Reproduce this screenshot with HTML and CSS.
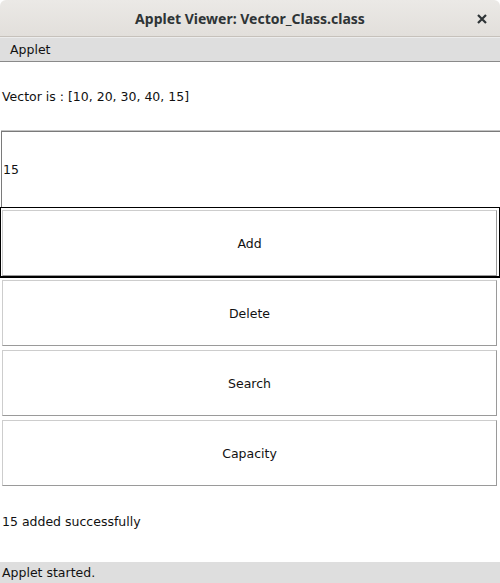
FILE: index.html
```html
<!DOCTYPE html>
<html>
<head>
<meta charset="utf-8">
<title>Applet Viewer: Vector_Class.class</title>
<link rel="stylesheet" href="styles.css">
</head>
<body>
<div class="window">
  <div class="titlebar">
    <span class="title">Applet Viewer: Vector_Class.class</span>
    <span class="close">
      <svg width="10" height="10" viewBox="0 0 10 10"><path d="M1 1L9 9M9 1L1 9" stroke="#2e3436" stroke-width="2.2" stroke-linecap="butt"/></svg>
    </span>
  </div>
  <div class="menubar"><span class="menu">Applet</span></div>
  <div class="applet">
    <div class="label-row">Vector is : [10, 20, 30, 40, 15]</div>
    <div class="textfield">15</div>
    <div class="focus">
      <div class="button">Add</div>
    </div>
    <div class="button">Delete</div>
    <div class="button">Search</div>
    <div class="button">Capacity</div>
    <div class="result-row">15 added successfully</div>
  </div>
  <div class="statusbar">Applet started.</div>
</div>
</body>
</html>
```
FILE: styles.css
```css
html, body {
  margin: 0;
  padding: 0;
  background: #ffffff;
}
.window {
  width: 500px;
  height: 583px;
  display: flex;
  flex-direction: column;
  font-family: "DejaVu Sans", sans-serif;
  font-size: 12.5px;
  color: #111;
  overflow: hidden;
}
.titlebar {
  height: 36px;
  border-bottom: 1px solid #c6c1bb;
  background: linear-gradient(#ebe9e6, #e2dfdb);
  border-radius: 6px 6px 0 0;
  display: flex;
  align-items: center;
  justify-content: center;
  position: relative;
}
.title {
  font-family: "Noto Sans", sans-serif;
  font-weight: 700;
  font-size: 14px;
  color: #2e3436;
}
.close {
  position: absolute;
  right: 13px;
  top: 14px;
  width: 10px;
  height: 10px;
  display: flex;
}
.menubar {
  background: #dedede;
  border-top: 1px solid #ececec;
  border-bottom: 1px solid #8a8a8a;
  display: flex;
  align-items: center;
  box-sizing: border-box;
  height: 25px;
}
.menu {
  padding-left: 10px;
  color: #111;
}
.applet {
  flex: 1;
  display: flex;
  flex-direction: column;
  background: #fff;
}
.label-row {
  height: 68px;
  display: flex;
  align-items: center;
  padding-left: 2px;
}
.textfield {
  margin-left: 1px;
  width: 497px;
  height: 75px;
  border-top: 1px solid #7a7a7a;
  border-left: 1px solid #7a7a7a;
  border-right: 1px solid #d4d4d4;
  box-shadow: 0 -1px 0 #c4c4c4;
  margin-top: 1px;
  display: flex;
  align-items: center;
  padding-left: 1px;
}
.focus {
  width: 497px;
  height: 66px;
  border-style: solid;
  border-color: #000;
  border-width: 1px 2px 2px 1px;
  padding: 2px 0 0 1px;
  box-sizing: content-box;
}
.focus .button {
  margin: 0;
}
.button {
  margin: 4px 0 0 2px;
  width: 493px;
  height: 64px;
  border-style: solid;
  border-width: 1px;
  border-color: #cdcdcd #9a9a9a #9a9a9a #cdcdcd;
  display: flex;
  align-items: center;
  justify-content: center;
  color: #111;
}
.focus + .button {
  margin-top: 2px;
}
.result-row {
  height: 70px;
  display: flex;
  align-items: center;
  padding-left: 2px;
}
.statusbar {
  height: 21px;
  background: #dedede;
  display: flex;
  align-items: center;
  padding-left: 2px;
}
```
